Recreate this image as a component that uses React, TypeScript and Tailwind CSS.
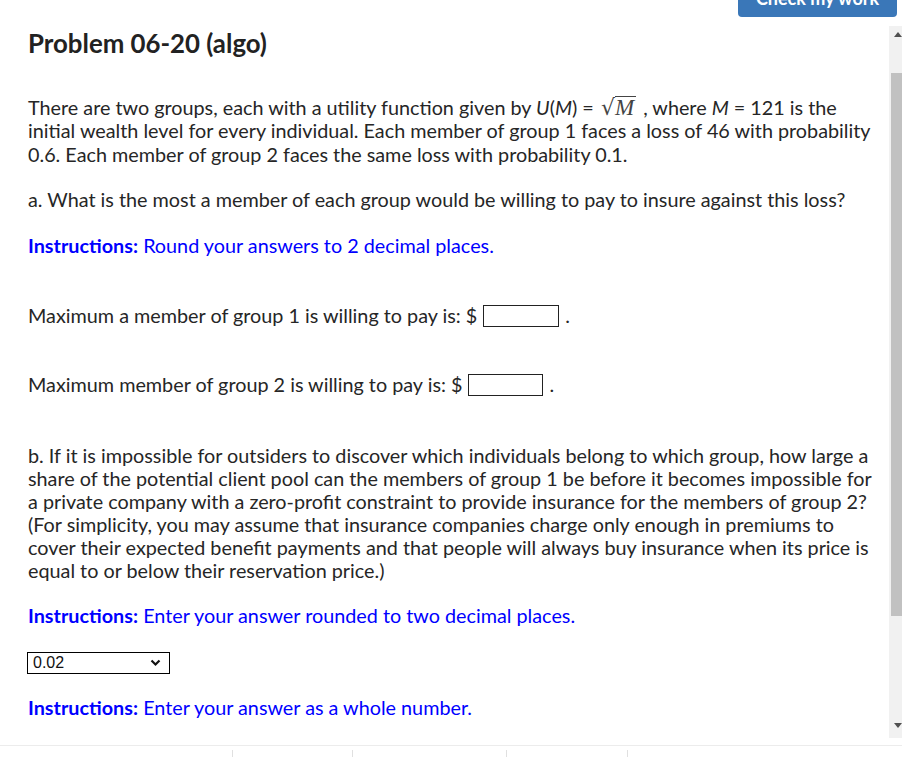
import React from "react";

const body = "text-[#262626]";
const font = { fontFamily: "Lato, 'Open Sans', sans-serif" };

function Blank({ w = 75 }: { w?: number }) {
  return (
    <span
      className="inline-block h-[22px] border border-[#222] align-middle bg-white"
      style={{ width: w }}
    />
  );
}

function Instr({ children, mt }: { children: React.ReactNode; mt: string }) {
  return (
    <p className={`${mt} text-[#0000ff] whitespace-nowrap`}>
      <span className="font-bold">Instructions:</span> {children}
    </p>
  );
}

export default function App() {
  return (
    <div
      className={`w-[902px] h-[757px] overflow-hidden bg-white flex flex-col ${body}`}
      style={font}
    >
      {/* top bar with cut-off button */}
      <div className="h-[26px] shrink-0 flex justify-end pr-[5px]">
        <div className="mt-[-22px] h-[39px] w-[159px] rounded-[4px] bg-[#3a77b8] text-white font-bold text-[18px] flex items-center justify-center leading-none">
          Check my work
        </div>
      </div>

      {/* scroll region */}
      <div className="h-[712px] shrink-0 flex w-[906px]">
        <div className="flex-1 overflow-hidden pl-[28px] text-[19.8px] leading-[23.4px]">
          <h1 className="mt-[2px] text-[25.8px] leading-[30px] font-bold text-[#222]">
            Problem 06-20 (algo)
          </h1>

          <div className="mt-[38px]">
            <p className="whitespace-nowrap">
              There are two groups, each with a utility function given by{" "}
              <i>U</i>(<i>M</i>) ={" "}
              <span className="inline-flex items-end align-baseline mx-[2px]">
                <span className="text-[#444] text-[22px] leading-[22px]" style={{ fontFamily: "'DejaVu Serif', serif" }}>
                  √
                </span>
                <span
                  className="border-t border-[#444] italic text-[23px] leading-[22px] pr-[2px] text-[#444]"
                  style={{ fontFamily: "'Liberation Serif', serif" }}
                >
                  M
                </span>
              </span>{" "}
              , where <i>M</i> = 121 is the
            </p>
            <p className="whitespace-nowrap">
              initial wealth level for every individual. Each member of group 1 faces a loss of 46 with probability
            </p>
            <p className="whitespace-nowrap">
              0.6. Each member of group 2 faces the same loss with probability 0.1.
            </p>
          </div>

          <p className="mt-[22px] whitespace-nowrap">
            a. What is the most a member of each group would be willing to pay to insure against this loss?
          </p>

          <Instr mt="mt-[22.5px]">Round your answers to 2 decimal places.</Instr>

          <p className="mt-[46.5px] whitespace-nowrap flex items-center gap-[6px]">
            <span>Maximum a member of group 1 is willing to pay is: $</span>
            <Blank w={76} />
            <span>.</span>
          </p>

          <p className="mt-[45.5px] whitespace-nowrap flex items-center gap-[6px]">
            <span>Maximum member of group 2 is willing to pay is: $</span>
            <Blank w={75} />
            <span>.</span>
          </p>

          <div className="mt-[47.5px] whitespace-nowrap leading-[23px]">
            <p>b. If it is impossible for outsiders to discover which individuals belong to which group, how large a</p>
            <p>share of the potential client pool can the members of group 1 be before it becomes impossible for</p>
            <p>a private company with a zero-profit constraint to provide insurance for the members of group 2?</p>
            <p>(For simplicity, you may assume that insurance companies charge only enough in premiums to</p>
            <p>cover their expected benefit payments and that people will always buy insurance when its price is</p>
            <p>equal to or below their reservation price.)</p>
          </div>

          <Instr mt="mt-[22px]">Enter your answer rounded to two decimal places.</Instr>

          <div
            className="mt-[24.5px] ml-[-1px] w-[143px] h-[22px] border border-black flex items-center justify-between pl-[5px] pr-[8px] text-[16px] text-[#111]"
            style={{ fontFamily: "'Liberation Sans', Arial, sans-serif" }}
          >
            <span>0.02</span>
            <svg width="11" height="8" viewBox="0 0 11 8">
              <path d="M1.5 1.5 L5.5 5.5 L9.5 1.5" fill="none" stroke="#111" strokeWidth="2.2" />
            </svg>
          </div>

          <Instr mt="mt-[22px]">Enter your answer as a whole number.</Instr>
        </div>

        {/* scrollbar */}
        <div className="w-[17px] shrink-0 bg-[#f1f1f1] flex flex-col">
          <div className="h-[17px] flex items-center justify-center">
            <svg width="8" height="5" viewBox="0 0 8 5">
              <path d="M0 5 L4 0 L8 5 Z" fill="#505050" />
            </svg>
          </div>
          <div className="h-[30px]" />
          <div className="h-[543px] mx-[2px] bg-[#c1c1c1]" />
          <div className="flex-1" />
          <div className="h-[17px] mb-[4px] flex items-center justify-center">
            <svg width="8" height="5" viewBox="0 0 8 5">
              <path d="M0 0 L4 5 L8 0 Z" fill="#505050" />
            </svg>
          </div>
        </div>
      </div>

      {/* bottom strip */}
      <div className="mt-[7px] h-[1px] bg-[#ececec] shrink-0" />
      <div className="flex-1 flex">
        <div className="w-[233px] border-r border-[#e0e0e0] mt-[4px]" />
        <div className="w-[120px] border-r border-[#e0e0e0] mt-[4px]" />
        <div className="w-[154px] border-r border-[#e0e0e0] mt-[4px]" />
        <div className="w-[121px] border-r border-[#e0e0e0] mt-[4px]" />
      </div>
    </div>
  );
}
